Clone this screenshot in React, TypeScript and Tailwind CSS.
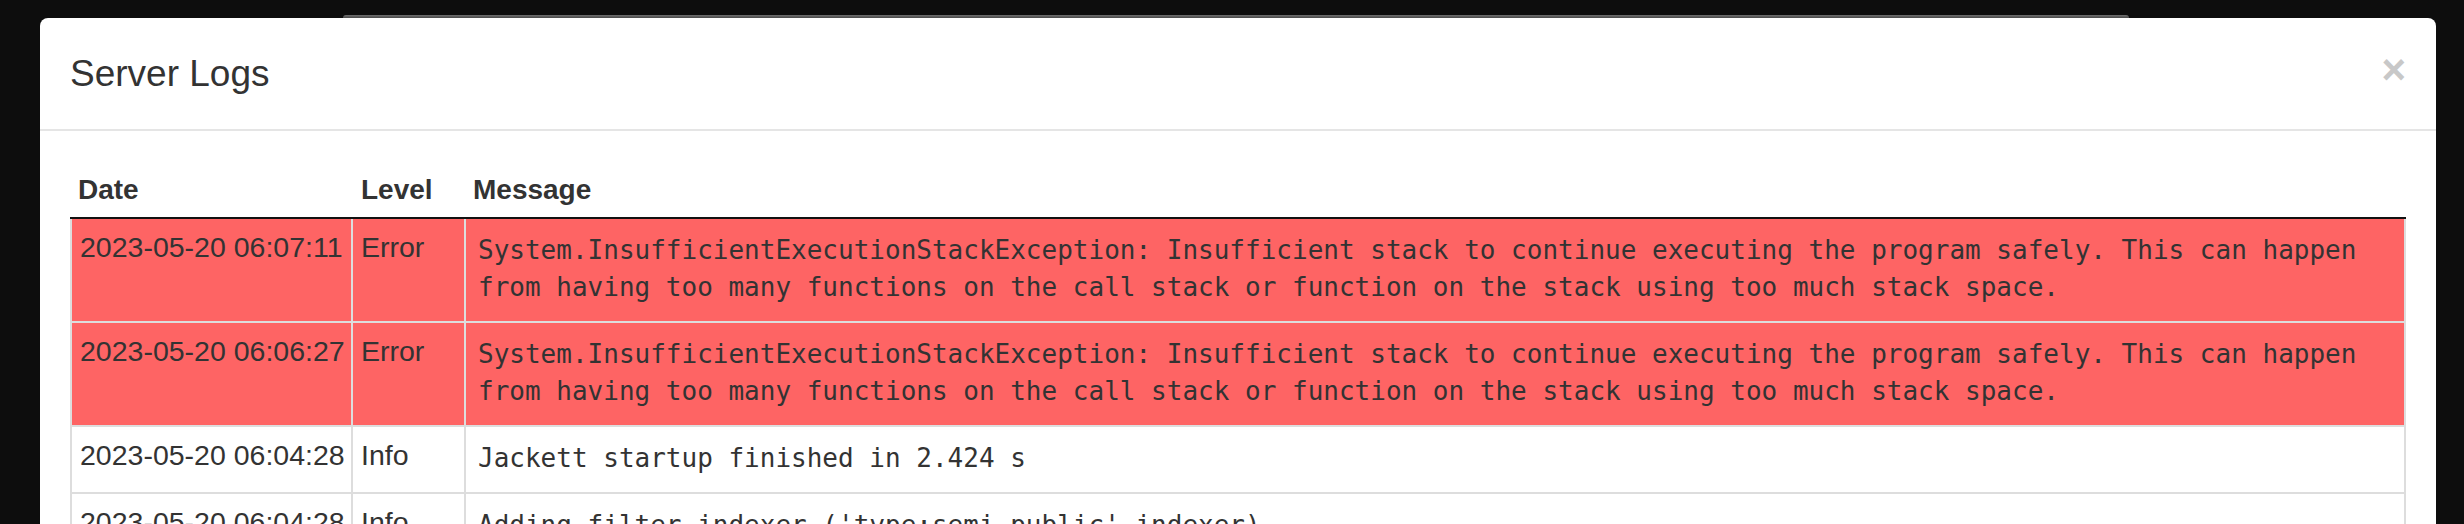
import React from "react";

type Row = { date: string; level: string; msg: string; error?: boolean };

const longMsg =
  "System.InsufficientExecutionStackException: Insufficient stack to continue executing the program safely. This can happen from having too many functions on the call stack or function on the stack using too much stack space.";

const rows: Row[] = [
  { date: "2023-05-20 06:07:11", level: "Error", msg: longMsg, error: true },
  { date: "2023-05-20 06:06:27", level: "Error", msg: longMsg, error: true },
  { date: "2023-05-20 06:04:28", level: "Info", msg: "Jackett startup finished in 2.424 s" },
  { date: "2023-05-20 06:04:28", level: "Info", msg: "Adding filter indexer ('type:semi-public' indexer)" },
  { date: "2023-05-20 06:04:28", level: "Info", msg: "Adding filter indexer ('type:public' indexer)" },
];

export default function App() {
  return (
    <div className="h-[524px] w-[2464px] overflow-hidden bg-[#0d0d0d] pt-[15px] font-['Liberation_Sans',Arial,sans-serif] text-[#333333]">
      <div className="ml-[343px] h-[3px] w-[1786px] rounded-t-[3px] bg-gradient-to-b from-[#707070] to-[#4a4a4a]" />
      <div className="ml-[40px] w-[2396px] rounded-[8px] bg-white">
        <div className="flex h-[113px] items-center justify-between border-b-2 border-[#e5e5e5] px-[30px]">
          <h4 className="text-[37px] font-normal leading-[51px]">Server Logs</h4>
          <span className="-translate-y-[4px] text-[42px] font-bold leading-none text-[#c8c8c8]">×</span>
        </div>
        <div className="px-[30px] pt-[31px]">
          <div className="flex border-b-2 border-[#111111] text-[28px] font-bold leading-[40px]">
            <div className="w-[281px] pb-[7px] pl-[8px] pt-[8px]">Date</div>
            <div className="w-[113px] pb-[7px] pl-[10px] pt-[8px]">Level</div>
            <div className="flex-1 pb-[7px] pl-[9px] pt-[8px]">Message</div>
          </div>
          {rows.map((r, i) => (
            <div
              key={i}
              className={
                "flex border-x-2 border-b-2 border-[#dddddd] " +
                (r.error ? "bg-[#fe6464]" : "bg-white")
              }
            >
              <div className="w-[279px] shrink-0 whitespace-nowrap pl-[8px] pt-[8px] text-[28.5px] leading-[40px]">{r.date}</div>
              <div className="w-[113px] shrink-0 whitespace-nowrap border-l-2 border-[#dddddd] pl-[8px] pt-[8px] text-[28.5px] leading-[40px]">
                {r.level}
              </div>
              <div className="min-w-0 flex-1 border-l-2 border-[#dddddd] pb-[15px] pl-[12px] pr-[12px] pt-[13px] font-['DejaVu_Sans_Mono',monospace] text-[26px] leading-[37px] whitespace-pre-wrap">
                {r.msg}
              </div>
            </div>
          ))}
        </div>
      </div>
    </div>
  );
}
